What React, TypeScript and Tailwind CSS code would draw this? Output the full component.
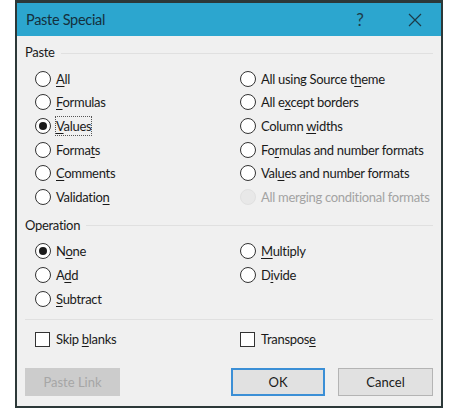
import React from 'react';

const font = { fontFamily: '"Lato", "Noto Sans", sans-serif' };

interface OptionProps {
    pre: string;
    key_: string;
    post: string;
    checked?: boolean;
    disabled?: boolean;
    focused?: boolean;
}

const Radio: React.FC<OptionProps> = ({ pre, key_, post, checked, disabled, focused }) => (
    <div className="flex items-center h-[23.6px] whitespace-nowrap">
        <span
            className={`w-[16px] h-[16px] rounded-full flex items-center justify-center shrink-0 ${disabled ? 'bg-[#e8e8e8] border border-[#e0e0e0]' : 'bg-white border border-[#333]'
                }`}
        >
            {checked && <span className="w-[8px] h-[8px] rounded-full bg-[#1a1a1a]" />}
        </span>
        <span
            className={`ml-[5px] leading-[18px] ${disabled ? 'text-[#a3a3a3]' : 'text-[#1a1a1a]'} ${focused ? 'outline outline-1 outline-dotted outline-[#555]' : ''
                }`}
        >
            {pre}
            {key_ && <span className="underline underline-offset-2">{key_}</span>}
            {post}
        </span>
    </div>
);

const Check: React.FC<OptionProps> = ({ pre, key_, post }) => (
    <div className="flex items-center h-[24px] whitespace-nowrap">
        <span className="w-[15px] h-[15px] bg-white border border-[#333] shrink-0" />
        <span className="ml-[6px] text-[#1a1a1a]">
            {pre}
            <span className="underline underline-offset-2">{key_}</span>
            {post}
        </span>
    </div>
);

const SectionLabel: React.FC<{ text: string }> = ({ text }) => (
    <div className="flex items-center h-[18px]">
        <span className="text-[#1a1a1a]">{text}</span>
        <div className="flex-1 ml-[6px] h-px bg-[#e0e0e0]" />
    </div>
);

const App: React.FC = () => {
    return (
        <div className="w-[474px] h-[411px] bg-white pl-[15px]" style={font}>
            <div className="w-[428px] h-[408px] border-2 border-t-[3px] border-[#2c3838] bg-[#f0f0f0] flex flex-col text-[13px] tracking-[-0.3px]">
                <div className="h-[33px] bg-[#2ca6cf] flex items-center pl-[9px] shrink-0">
                    <span className="text-[14.5px] text-[#14303d] flex-1">Paste Special</span>
                    <span className="text-[17px] text-[#1d3b48] w-[20px] text-center mr-[38px]">?</span>
                    <svg width="14" height="14" viewBox="0 0 14 14" className="mr-[19px]">
                        <path d="M1 1 L13 13 M13 1 L1 13" stroke="#1d3b48" strokeWidth="1.2" fill="none" />
                    </svg>
                </div>

                <div className="px-[8px] pt-[8px]">
                    <SectionLabel text="Paste" />
                    <div className="grid grid-cols-2 mt-[5px] pl-[10px]">
                        <div className="flex flex-col">
                            <Radio pre="" key_="A" post="ll" />
                            <Radio pre="" key_="F" post="ormulas" />
                            <Radio pre="" key_="V" post="alues" checked focused />
                            <Radio pre="Forma" key_="t" post="s" />
                            <Radio pre="" key_="C" post="omments" />
                            <Radio pre="Validatio" key_="n" post="" />
                        </div>
                        <div className="flex flex-col pl-[6px]">
                            <Radio pre="All using Source t" key_="h" post="eme" />
                            <Radio pre="All e" key_="x" post="cept borders" />
                            <Radio pre="Column " key_="w" post="idths" />
                            <Radio pre="Fo" key_="r" post="mulas and number formats" />
                            <Radio pre="Val" key_="u" post="es and number formats" />
                            <Radio pre="All merging conditional formats" key_="" post="" disabled />
                        </div>
                    </div>

                    <div className="mt-[8px]">
                        <SectionLabel text="Operation" />
                    </div>
                    <div className="grid grid-cols-2 mt-[5px] pl-[10px]">
                        <div className="flex flex-col">
                            <Radio pre="N" key_="o" post="ne" checked />
                            <Radio pre="A" key_="d" post="d" />
                            <Radio pre="" key_="S" post="ubtract" />
                        </div>
                        <div className="flex flex-col pl-[6px]">
                            <Radio pre="" key_="M" post="ultiply" />
                            <Radio pre="D" key_="i" post="vide" />
                        </div>
                    </div>

                    <div className="h-px bg-[#e0e0e0] mt-[9px]" />

                    <div className="grid grid-cols-2 mt-[7px] pl-[10px]">
                        <Check pre="Skip " key_="b" post="lanks" />
                        <div className="pl-[6px]">
                            <Check pre="Transpos" key_="e" post="" />
                        </div>
                    </div>

                    <div className="flex mt-[17px] h-[28px] tracking-normal">
                        <div className="w-[95px] bg-[#cccccc] flex items-center justify-center text-[#a6a6a6]">
                            Paste Link
                        </div>
                        <div className="flex-1" />
                        <div className="w-[94px] bg-[#e1e1e1] border-2 border-[#3b8fd6] flex items-center justify-center text-[#1a1a1a]">
                            OK
                        </div>
                        <div className="w-[95px] ml-[13px] bg-[#e1e1e1] border border-[#b4b4b4] flex items-center justify-center text-[#1a1a1a]">
                            Cancel
                        </div>
                    </div>
                </div>
            </div>
        </div>
    );
};

export default App;
